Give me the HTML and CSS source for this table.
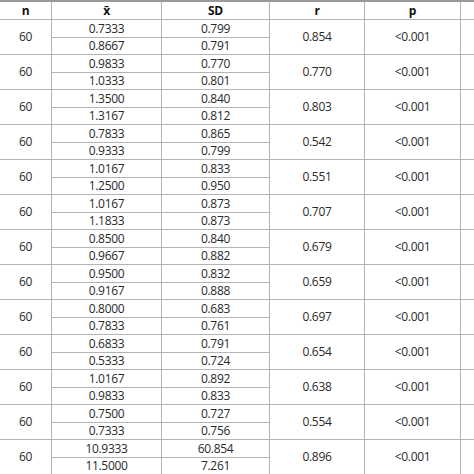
FILE: index.html
```html
<!DOCTYPE html>
<html>
<head>
<meta charset="utf-8">
<link rel="stylesheet" href="styles.css">
</head>
<body>
<div class="table">
  <div class="c h">n</div><div class="c h">x&#772;</div><div class="c h">SD</div><div class="c h">r</div><div class="c h">p</div><div class="c h"></div>

  <div class="c s">60</div><div class="c">0.7333</div><div class="c">0.799</div><div class="c s">0.854</div><div class="c s">&lt;0.001</div><div class="c s"></div><div class="c b">0.8667</div><div class="c b">0.791</div>
  <div class="c s">60</div><div class="c">0.9833</div><div class="c">0.770</div><div class="c s">0.770</div><div class="c s">&lt;0.001</div><div class="c s"></div><div class="c b">1.0333</div><div class="c b">0.801</div>
  <div class="c s">60</div><div class="c">1.3500</div><div class="c">0.840</div><div class="c s">0.803</div><div class="c s">&lt;0.001</div><div class="c s"></div><div class="c b">1.3167</div><div class="c b">0.812</div>
  <div class="c s">60</div><div class="c">0.7833</div><div class="c">0.865</div><div class="c s">0.542</div><div class="c s">&lt;0.001</div><div class="c s"></div><div class="c b">0.9333</div><div class="c b">0.799</div>
  <div class="c s">60</div><div class="c">1.0167</div><div class="c">0.833</div><div class="c s">0.551</div><div class="c s">&lt;0.001</div><div class="c s"></div><div class="c b">1.2500</div><div class="c b">0.950</div>
  <div class="c s">60</div><div class="c">1.0167</div><div class="c">0.873</div><div class="c s">0.707</div><div class="c s">&lt;0.001</div><div class="c s"></div><div class="c b">1.1833</div><div class="c b">0.873</div>
  <div class="c s">60</div><div class="c">0.8500</div><div class="c">0.840</div><div class="c s">0.679</div><div class="c s">&lt;0.001</div><div class="c s"></div><div class="c b">0.9667</div><div class="c b">0.882</div>
  <div class="c s">60</div><div class="c">0.9500</div><div class="c">0.832</div><div class="c s">0.659</div><div class="c s">&lt;0.001</div><div class="c s"></div><div class="c b">0.9167</div><div class="c b">0.888</div>
  <div class="c s">60</div><div class="c">0.8000</div><div class="c">0.683</div><div class="c s">0.697</div><div class="c s">&lt;0.001</div><div class="c s"></div><div class="c b">0.7833</div><div class="c b">0.761</div>
  <div class="c s">60</div><div class="c">0.6833</div><div class="c">0.791</div><div class="c s">0.654</div><div class="c s">&lt;0.001</div><div class="c s"></div><div class="c b">0.5333</div><div class="c b">0.724</div>
  <div class="c s">60</div><div class="c">1.0167</div><div class="c">0.892</div><div class="c s">0.638</div><div class="c s">&lt;0.001</div><div class="c s"></div><div class="c b">0.9833</div><div class="c b">0.833</div>
  <div class="c s">60</div><div class="c">0.7500</div><div class="c">0.727</div><div class="c s">0.554</div><div class="c s">&lt;0.001</div><div class="c s"></div><div class="c b">0.7333</div><div class="c b">0.756</div>
  <div class="c s">60</div><div class="c">10.9333</div><div class="c">60.854</div><div class="c s">0.896</div><div class="c s">&lt;0.001</div><div class="c s"></div><div class="c b">11.5000</div><div class="c b">7.261</div>
</div>
</body>
</html>
```
FILE: styles.css
```css
html, body {
  margin: 0;
  padding: 0;
  background: #fff;
}
.table {
  width: 474px;
  height: 474px;
  overflow: hidden;
  display: grid;
  grid-template-columns: 51px 109px 107px 94px 95px 1fr;
  grid-template-rows: 17px repeat(13, 17px 16px);
  gap: 1px;
  background: #b4b4b4;
  border-top: 2px solid #9a9a9a;
  box-sizing: border-box;
  font-family: "Open Sans", "Noto Sans", sans-serif;
  font-size: 12px;
  letter-spacing: -0.3px;
  color: #2a2a2a;
}
.c {
  background: #fff;
  display: flex;
  align-items: center;
  justify-content: center;
  line-height: 1;
}
.h {
  font-weight: 700;
  color: #111;
}
.s {
  grid-row: span 2;
}
```
